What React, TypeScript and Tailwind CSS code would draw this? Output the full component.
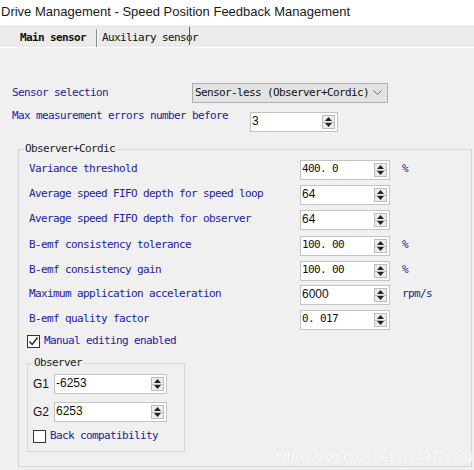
import React from 'react';

const mono = "font-['DejaVu_Sans_Mono','Liberation_Mono',monospace] text-[11px] tracking-[-0.62px]";
const sans = "font-['Liberation_Sans',Arial,sans-serif] text-[12px]";

type Row = { label: string; value: string; unit?: string; h: number };

const observerRows: Row[] = [
  { label: 'Variance threshold', value: '400.0', unit: '%', h: 25 },
  { label: 'Average speed FIFO depth for speed loop', value: '64', h: 25 },
  { label: 'Average speed FIFO depth for observer', value: '64', h: 26 },
  { label: 'B-emf consistency tolerance', value: '100.00', unit: '%', h: 25 },
  { label: 'B-emf consistency gain', value: '100.00', unit: '%', h: 24 },
  { label: 'Maximum application acceleration', value: '6000', unit: 'rpm/s', h: 25 },
  { label: 'B-emf quality factor', value: '0.017', h: 20 },
];

function Arrow({ up }: { up?: boolean }) {
  return (
    <svg width="7" height="4" viewBox="0 0 7 4" className="block">
      {up ? <path d="M0 4 L3.5 0 L7 4 Z" fill="#222" /> : <path d="M0 0 L3.5 4 L7 0 Z" fill="#222" />}
    </svg>
  );
}

function SpinBox({ value, width }: { value: string; width: string }) {
  const isDecimal = value.includes('.');
  return (
    <div className={`${width} h-[20px] bg-white border border-[#c4c4c4] flex items-stretch shrink-0`}>
      <div className={`flex-1 pl-[1px] leading-[16px] text-[#111] ${isDecimal ? mono : sans}`}>
        {isDecimal ? value.replace('.', '. ') : value}
      </div>
      <div className="w-[13px] my-[2px] mr-[2px] flex flex-col">
        <div className="flex-1 flex items-center justify-center bg-[#ececec] border border-[#bcbcbc]">
          <Arrow up />
        </div>
        <div className="flex-1 flex items-center justify-center bg-[#ececec] border border-t-0 border-[#bcbcbc]">
          <Arrow />
        </div>
      </div>
    </div>
  );
}

function CheckBox({ checked }: { checked?: boolean }) {
  return (
    <div className="w-[13px] h-[13px] bg-white border border-[#333] flex items-center justify-center shrink-0">
      {checked && (
        <svg width="11" height="11" viewBox="0 0 11 11">
          <path d="M1.5 5.5 L4.2 8.5 L9.5 1.5" stroke="#222" strokeWidth="1.4" fill="none" />
        </svg>
      )}
    </div>
  );
}

export default function App() {
  return (
    <div className="w-[474px] h-[470px] overflow-hidden bg-[#f0f0f0] relative">
      <div className="h-[25px] bg-white pl-[1px] leading-[24px] text-[13px] text-[#1a1a1a] font-['Liberation_Sans',Arial,sans-serif] whitespace-nowrap">
        Drive Management - Speed Position Feedback Management
      </div>

      <div className="h-[23px] bg-[#ebebeb] border-b border-white flex items-end">
        <div className={`ml-[20px] mb-[1px] font-bold text-[#111] ${mono}`}>Main sensor</div>
        <div className="ml-[10px] w-[2px] h-[18px] bg-[#8a8a8a] border-r border-white" />
        <div className={`ml-[4px] mb-[1px] text-[#111] relative ${mono}`}>
          Auxiliary sensor
          <span className="absolute left-[87px] top-[-3px] w-px h-[18px] bg-[#555]" />
        </div>
      </div>

      <div className="flex items-center h-[20px] mt-[35px]">
        <div className={`pl-[12px] w-[192px] text-[#21219a] ${mono}`}>Sensor selection</div>
        <div className="w-[196px] h-[20px] bg-[#e3e3e3] border border-[#adadad] flex items-center pl-[2px] pr-[5px]">
          <span className={`flex-1 text-[#111] ${mono}`}>Sensor-less (Observer+Cordic)</span>
          <svg width="9" height="6" viewBox="0 0 9 6">
            <path d="M0.5 0.5 L4.5 4.5 L8.5 0.5" stroke="#666" strokeWidth="1" fill="none" />
          </svg>
        </div>
      </div>

      <div className="flex items-start mt-[9px]">
        <div className={`pl-[12px] w-[250px] -mt-[4px] leading-[16px] text-[#21219a] ${mono}`}>
          Max measurement errors number before
        </div>
        <SpinBox value="3" width="w-[88px]" />
      </div>

      <fieldset className="ml-[18px] mr-[2px] mt-[11px] h-[324px] border border-[#d6d6d6] min-w-0">
        <legend className={`ml-[5px] px-[1px] leading-[12px] text-[#222] ${mono}`}>Observer+Cordic</legend>

        <div className="mt-[5px]">
          {observerRows.map(row => (
            <div key={row.label} className="flex items-start" style={{ height: row.h }}>
              <div className={`pl-[10px] w-[281px] leading-[17px] text-[#21219a] ${mono}`}>{row.label}</div>
              <SpinBox value={row.value} width="w-[90px]" />
              {row.unit && <div className={`ml-[12px] leading-[18px] text-[#21219a] ${mono}`}>{row.unit}</div>}
            </div>
          ))}
        </div>

        <div className="flex items-center gap-[4px] ml-[8px] mt-[5px] h-[13px]">
          <CheckBox checked />
          <span className={`text-[#21219a] ${mono}`}>Manual editing enabled</span>
        </div>

        <fieldset className="ml-[8px] mt-[9px] w-[158px] h-[95px] border border-[#d6d6d6] min-w-0">
          <legend className={`ml-[5px] px-[1px] leading-[12px] text-[#222] ${mono}`}>Observer</legend>
          <div className="flex items-center mt-[5px] pl-[5px]">
            <span className={`w-[21px] text-[#111] ${sans}`}>G1</span>
            <SpinBox value="-6253" width="w-[113px]" />
          </div>
          <div className="flex items-center mt-[8px] pl-[5px]">
            <span className={`w-[21px] text-[#111] ${sans}`}>G2</span>
            <SpinBox value="6253" width="w-[113px]" />
          </div>
          <div className="flex items-center gap-[4px] mt-[8px] pl-[5px] h-[13px]">
            <CheckBox />
            <span className={`text-[#21219a] ${mono}`}>Back compatibility</span>
          </div>
        </fieldset>
      </fieldset>

      <div className="absolute left-[276px] top-[447px] text-[13px] text-white font-['Liberation_Sans',Arial,sans-serif] [text-shadow:0_0_1px_#d0d0d0]">
        https://blog.csdn.net/sy243772901
      </div>
    </div>
  );
}
